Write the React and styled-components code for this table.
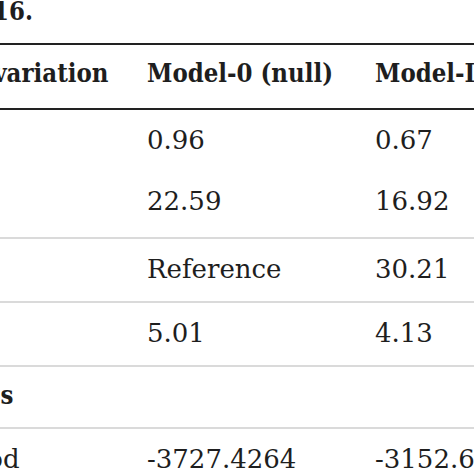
import React from 'react'
import styled, { createGlobalStyle } from 'styled-components'

const GlobalStyle = createGlobalStyle`
  html, body {
    margin: 0;
    padding: 0;
    background: #ffffff;
  }
  body {
    font-family: "DejaVu Serif", "Liberation Serif", serif;
    color: #1e1e1e;
  }
`

const columns = ['Measure of variation', 'Model-0 (null)', 'Model-I', 'Model-II']

const sections = [
  {
    rows: [
      ['Variance', '0.96', '0.67', '0.52'],
      ['ICC (%)', '22.59', '16.92', '13.71'],
    ],
  },
  { rows: [['PCV (%)', 'Reference', '30.21', '45.83']] },
  { rows: [['MOR', '5.01', '4.13', '3.68']] },
  { title: 'Model fitness' },
  { rows: [['Loglikelihood', '-3727.4264', '-3152.6018', '-3051.2297']] },
]

const App = () => {
  return (
    <Page>
      <GlobalStyle />
      <Sheet>
        <Caption>EDHS 2016.</Caption>
        <Table>
          <HeadRow>
            {columns.map(c => <HeadCell key={c}>{c}</HeadCell>)}
          </HeadRow>
          {sections.map((s, i) =>
            s.title ? (
              <Section key={i} $title>
                <TitleCell>{s.title}</TitleCell>
              </Section>
            ) : (
              <Section key={i} $group={s.rows.length > 1}>
                {s.rows.map(r => (
                  <Row key={r[0]}>
                    {r.map((v, j) => <Cell key={j}>{v}</Cell>)}
                  </Row>
                ))}
              </Section>
            )
          )}
        </Table>
      </Sheet>
    </Page>
  )
}

export default App

const Page = styled.div`
  width: 100vw;
  height: 100vh;
  overflow: hidden;
`

const Sheet = styled.div`
  margin-left: -159px;
  width: 990px;
`

const Caption = styled.div`
  width: 192px;
  margin-top: -4px;
  margin-bottom: 17px;
  text-align: right;
  white-space: nowrap;
  font-family: "DejaVu Serif Condensed", "DejaVu Serif", serif;
  font-weight: bold;
  font-size: 25.5px;
  line-height: 30px;
`

const Table = styled.div`
  border-top: 2px solid #222222;
`

const Row = styled.div`
  display: grid;
  grid-template-columns: 306px 228px 228px 228px;
  padding: 15px 0 16px;
`

const HeadRow = styled(Row)`
  padding: 13px 0 20px;
  border-bottom: 2px solid #222222;
`

const Section = styled.div`
  border-bottom: 2px solid #dadada;
  padding-bottom: ${p => (p.$group ? '5px' : '1px')};
  padding-top: ${p => (p.$title ? '13px' : '0')};
  height: ${p => (p.$title ? '46px' : 'auto')};

  &:last-child {
    border-bottom: none;
  }
`

const Cell = styled.div`
  font-size: 26px;
  line-height: 30px;
  white-space: nowrap;
`

const HeadCell = styled.div`
  font-family: "DejaVu Serif Condensed", "DejaVu Serif", serif;
  font-weight: bold;
  font-size: 25.5px;
  line-height: 30px;
  white-space: nowrap;
`

const TitleCell = styled(HeadCell)``
